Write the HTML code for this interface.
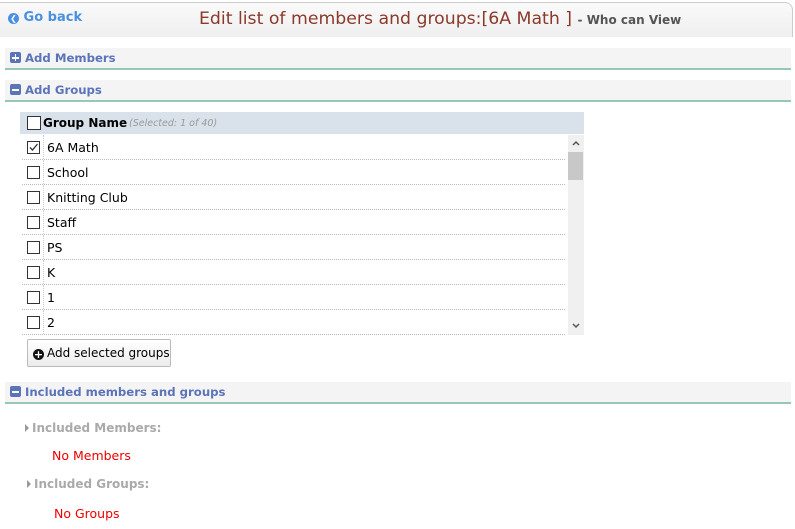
<!DOCTYPE html>
<html><head><style>
body{margin:0;width:795px;height:529px;background:#fff;font-family:"DejaVu Sans",Verdana,sans-serif;position:relative;overflow:hidden}
.abs{position:absolute}
.hdr{left:0;top:2px;width:792px;height:34px;background:linear-gradient(#fafafa,#efefef);border-top:1px solid #ccc;border-right:1px solid #ccc;border-top-right-radius:8px}
.bar{left:5px;width:786px;height:20px;background:#f4f4f4;border-bottom:2px solid #97c8b4;font-weight:bold;font-size:11.7px;color:#5b74b9;line-height:21px}
.ic{display:inline-block;width:11px;height:11px;background:#5b74b9;border-radius:2px;vertical-align:-1px;margin:0 4px 0 5px;position:relative}
.ic:before{content:"";position:absolute;left:2px;top:5px;width:7px;height:1.5px;background:#fff}
.ic.p:after{content:"";position:absolute;left:4.7px;top:2px;width:1.5px;height:7px;background:#fff}
.row{left:22px;width:543px;height:24px;border-bottom:1px dotted #bbb;font-size:12.5px;line-height:25px}
.cb{position:absolute;left:5px;top:6px;width:11px;height:11px;border:1px solid #333;background:#fff}
.row span{position:absolute;left:25px}
.vl{position:absolute;left:21px;top:0;height:24px;border-left:1px dotted #ccc}
.tri{display:inline-block;width:0;height:0;border-left:4px solid #999;border-top:4px solid transparent;border-bottom:4px solid transparent;margin-right:3px;vertical-align:0}
</style></head><body>
<div class="abs hdr"></div>
<div class="abs" style="left:8px;top:10px;font-size:13px;font-weight:bold;color:#4a90e2"><span style="display:inline-block;width:11px;height:11px;border-radius:50%;background:#4a90e2;color:#fff;font-size:8px;line-height:11px;text-align:center;vertical-align:0px">&#10094;</span> Go back</div>
<div class="abs" style="left:199px;top:9px;font-size:17.3px;color:#8b3a2a;white-space:nowrap">Edit list of members and groups:[6A Math ] <span style="font-size:12px;font-weight:bold;color:#555">- Who can View</span></div>
<div class="abs bar" style="top:48px"><span class="ic p"></span>Add Members</div>
<div class="abs bar" style="top:80px"><span class="ic"></span>Add Groups</div>
<div class="abs" style="left:20px;top:112px;width:564px;height:22px;background:#d9e2ea;font-size:12.5px;line-height:23px"><div class="cb" style="left:7px;top:4px;width:12px;height:12px"></div><b style="position:absolute;left:23px;font-size:12px">Group Name</b><i style="position:absolute;left:109px;font-size:9.5px;color:#999">(Selected: 1 of 40)</i></div>
<div class="abs" style="left:20px;top:135px;width:564px;height:200px;overflow:hidden">
<div style="position:absolute;left:548px;top:0;width:16px;height:200px;background:#f0f0f0"><div style="position:absolute;left:0;top:17px;width:15px;height:28px;background:#c8c8c8"></div><svg style="position:absolute;left:4px;top:5px" width="8" height="6"><path d="M1 5L4 2L7 5" stroke="#555" stroke-width="1.5" fill="none"/></svg><svg style="position:absolute;left:4px;top:188px" width="8" height="6"><path d="M1 1L4 4L7 1" stroke="#555" stroke-width="1.5" fill="none"/></svg></div>
</div>
<div class="abs row" style="top:135px"><div class="cb"><svg width="11" height="11" style="position:absolute;left:0;top:0"><path d="M2 5.5L4.5 8L9.5 2" stroke="#333" stroke-width="1.3" fill="none"/></svg></div><div class="vl"></div><span>6A Math</span></div>
<div class="abs row" style="top:160px"><div class="cb"></div><div class="vl"></div><span>School</span></div>
<div class="abs row" style="top:185px"><div class="cb"></div><div class="vl"></div><span>Knitting Club</span></div>
<div class="abs row" style="top:210px"><div class="cb"></div><div class="vl"></div><span>Staff</span></div>
<div class="abs row" style="top:235px"><div class="cb"></div><div class="vl"></div><span>PS</span></div>
<div class="abs row" style="top:260px"><div class="cb"></div><div class="vl"></div><span>K</span></div>
<div class="abs row" style="top:285px"><div class="cb"></div><div class="vl"></div><span>1</span></div>
<div class="abs row" style="top:310px"><div class="cb"></div><div class="vl"></div><span>2</span></div>
<div class="abs" style="left:27px;top:339px;width:142px;height:26px;border:1px solid #bbb;border-radius:2px;background:linear-gradient(#fff,#ececec);font-size:12px;line-height:26px;white-space:nowrap"><span style="display:inline-block;width:11px;height:11px;border-radius:50%;background:#111;color:#fff;font-size:11px;line-height:11px;text-align:center;margin:0 3px 0 5px;font-weight:bold;vertical-align:-1px">+</span>Add selected groups</div>
<div class="abs bar" style="top:382px"><span class="ic"></span>Included members and groups</div>
<div class="abs" style="left:25px;top:421px;font-size:12px;font-weight:bold;color:#aaa"><span class="tri"></span>Included Members:</div>
<div class="abs" style="left:52px;top:448px;font-size:12.5px;color:#e00">No Members</div>
<div class="abs" style="left:27px;top:477px;font-size:12px;font-weight:bold;color:#aaa"><span class="tri"></span>Included Groups:</div>
<div class="abs" style="left:54px;top:506px;font-size:12.5px;color:#e00">No Groups</div>
</body></html>
